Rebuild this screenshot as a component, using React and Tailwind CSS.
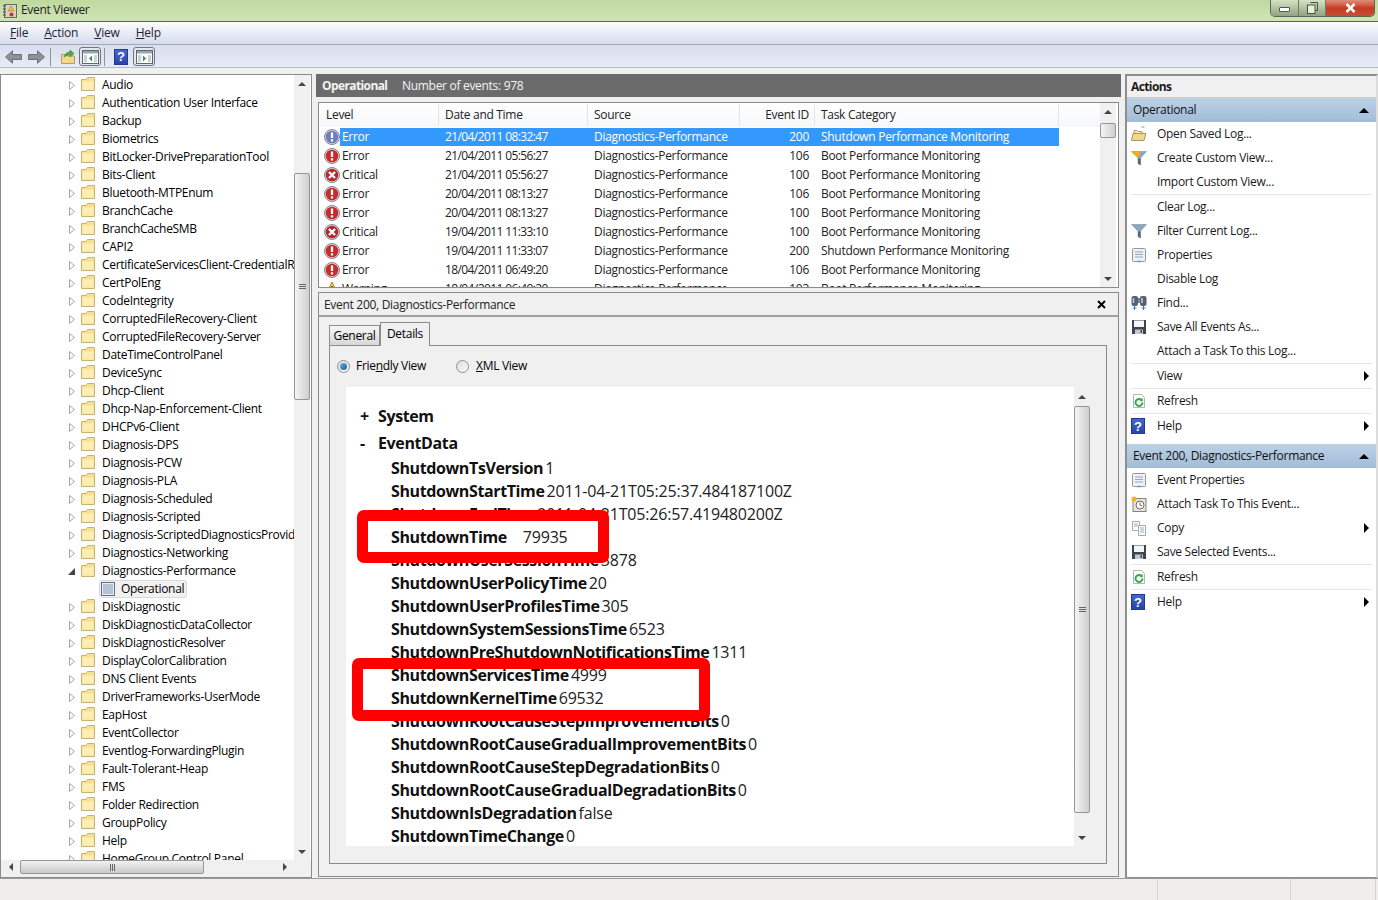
import React from "react";

const treeItems = [
  "Audio", "Authentication User Interface", "Backup", "Biometrics", "BitLocker-DrivePreparationTool",
  "Bits-Client", "Bluetooth-MTPEnum", "BranchCache", "BranchCacheSMB", "CAPI2",
  "CertificateServicesClient-CredentialRoaming", "CertPolEng", "CodeIntegrity", "CorruptedFileRecovery-Client",
  "CorruptedFileRecovery-Server", "DateTimeControlPanel", "DeviceSync", "Dhcp-Client", "Dhcp-Nap-Enforcement-Client",
  "DHCPv6-Client", "Diagnosis-DPS", "Diagnosis-PCW", "Diagnosis-PLA", "Diagnosis-Scheduled", "Diagnosis-Scripted",
  "Diagnosis-ScriptedDiagnosticsProvider", "Diagnostics-Networking", "Diagnostics-Performance", "Operational",
  "DiskDiagnostic", "DiskDiagnosticDataCollector", "DiskDiagnosticResolver", "DisplayColorCalibration",
  "DNS Client Events", "DriverFrameworks-UserMode", "EapHost", "EventCollector", "Eventlog-ForwardingPlugin",
  "Fault-Tolerant-Heap", "FMS", "Folder Redirection", "GroupPolicy", "Help", "HomeGroup Control Panel",
];

const events = [
  ["info", "Error", "21/04/2011 08:32:47", "200", "Shutdown Performance Monitoring"],
  ["error", "Error", "21/04/2011 05:56:27", "106", "Boot Performance Monitoring"],
  ["critical", "Critical", "21/04/2011 05:56:27", "100", "Boot Performance Monitoring"],
  ["error", "Error", "20/04/2011 08:13:27", "106", "Boot Performance Monitoring"],
  ["error", "Error", "20/04/2011 08:13:27", "100", "Boot Performance Monitoring"],
  ["critical", "Critical", "19/04/2011 11:33:10", "100", "Boot Performance Monitoring"],
  ["error", "Error", "19/04/2011 11:33:07", "200", "Shutdown Performance Monitoring"],
  ["error", "Error", "18/04/2011 06:49:20", "106", "Boot Performance Monitoring"],
  ["warning", "Warning", "18/04/2011 06:49:20", "103", "Boot Performance Monitoring"],
];

const eventData = [
  ["ShutdownTsVersion", "1"],
  ["ShutdownStartTime", "2011-04-21T05:25:37.484187100Z"],
  ["ShutdownEndTime", "2011-04-21T05:26:57.419480200Z"],
  ["ShutdownTime", "79935", "ml-[16px]"],
  ["ShutdownUserSessionTime", "3878"],
  ["ShutdownUserPolicyTime", "20"],
  ["ShutdownUserProfilesTime", "305"],
  ["ShutdownSystemSessionsTime", "6523"],
  ["ShutdownPreShutdownNotificationsTime", "1311"],
  ["ShutdownServicesTime", "4999"],
  ["ShutdownKernelTime", "69532"],
  ["ShutdownRootCauseStepImprovementBits", "0"],
  ["ShutdownRootCauseGradualImprovementBits", "0"],
  ["ShutdownRootCauseStepDegradationBits", "0"],
  ["ShutdownRootCauseGradualDegradationBits", "0"],
  ["ShutdownIsDegradation", "false"],
  ["ShutdownTimeChange", "0"],
];

function FolderIcon() {
  return (
    <svg width="14" height="14" viewBox="0 0 14 14" className="-mt-[3px] shrink-0">
      <path d="M.5 13.500V2.500h4.500l1.500-2h7v13z" fill="#f9e08f" stroke="#c8b27a" />
      <path d="M1.500 4.500h11v8h-11z" fill="#fdeeb4" />
    </svg>
  );
}

function LogIcon() {
  return (
    <svg width="14" height="16" viewBox="0 0 14 16" className="shrink-0">
      <rect x=".5" y="1.500" width="13" height="13" fill="#e8eef6" stroke="#5f6f85" />
      <path d="M2 4h10M2 6h10M2 8h10M2 10h10M2 12h10" stroke="#8296b2" />
    </svg>
  );
}

function LevelIcon({ type }) {
  if (type === "warning") {
    return (
      <svg width="16" height="16" viewBox="0 0 16 16" className="shrink-0">
        <path d="M8 1 15 15H1z" fill="#fcd34d" stroke="#b58a12" />
        <path d="M8 5v6M8 12v2" stroke="#333" strokeWidth="1.500" />
      </svg>
    );
  }
  const fills = { info: "#6f7cc0", error: "#c92a2a", critical: "#b4282d" };
  return (
    <svg width="16" height="16" viewBox="0 0 16 16" className="shrink-0">
      <circle cx="8" cy="8" r="7.500" fill="#dcdce2" stroke="#85858e" />
      <circle cx="8" cy="8" r="6.300" fill={fills[type]} />
      {type === "critical" ? (
        <path d="M5 5l6 6M11 5l-6 6" stroke="#fff" strokeWidth="2.300" />
      ) : (
        <path d="M8 3.500v5.500M8 10.300v2.200" stroke="#fff" strokeWidth="2.300" />
      )}
    </svg>
  );
}

function HelpIcon() {
  return (
    <span className="flex h-[16px] w-[14px] shrink-0 items-center justify-center border border-[#23388f] bg-gradient-to-b from-[#4468cf] to-[#2a43a8] font-['Liberation_Sans',sans-serif] text-[13px] leading-none font-bold tracking-normal text-white">
      ?
    </span>
  );
}

function RefreshIcon() {
  return (
    <svg width="16" height="16" viewBox="0 0 16 16">
      <path d="M2.500 1.500h8l3 3v10h-11z" fill="#fff" stroke="#b5b5b5" />
      <path d="M11.500 9.500a3.500 3.500 0 1 1-1-2.500" fill="none" stroke="#38a84a" strokeWidth="2" />
      <path d="M11.800 4.800v3.400H8.400z" fill="#38a84a" />
    </svg>
  );
}

function PropsIcon() {
  return (
    <svg width="16" height="16" viewBox="0 0 16 16">
      <rect x="1.500" y="1.500" width="13" height="13" rx="1" fill="#eef1f5" stroke="#8f98a3" />
      <path d="M4 5h8M4 7.500h8M4 10h8" stroke="#9aa5b3" />
      <path d="M6 14.500h4" stroke="#4aa3df" strokeWidth="1.500" />
    </svg>
  );
}

function SaveIcon() {
  return (
    <svg width="16" height="16" viewBox="0 0 16 16">
      <path d="M1 1h14v14H1z" fill="#3d4650" />
      <path d="M3 1.500h10V8H3z" fill="#f4f5f6" />
      <path d="M4 10.500h8V15H4z" fill="#c5c9ce" />
      <path d="M9.500 11H11v3H9.500z" fill="#3d4650" />
    </svg>
  );
}

function FunnelIcon({ tint }) {
  return (
    <svg width="16" height="16" viewBox="0 0 16 16">
      <path d="M.5 1.500h15L9.500 8v7l-2.500-1.500V8z" fill="#86a9c4" stroke="#6a8294" strokeWidth=".5" />
      <path d="M7 8.500h2.500V15L7 13.500z" fill="#59656f" />
      {tint && <path d="M.5 1.500h9.500L7.500 7H5.500z" fill="#f5ad18" />}
    </svg>
  );
}

function ActionIcon({ name }) {
  if (name === "open") {
    return (
      <svg width="16" height="16" viewBox="0 0 16 16">
        <path d="M3 7V4.500h3l1 1h4V7" fill="#f7e9bd" stroke="#b39a5e" />
        <path d="M.5 14.500 2 7.500h13l-2 7z" fill="#efd691" stroke="#ad955c" />
        <path d="M10.500 1h3" stroke="#5cb85c" />
      </svg>
    );
  }
  if (name === "create") return <FunnelIcon tint />;
  if (name === "filter") return <FunnelIcon />;
  if (name === "props") return <PropsIcon />;
  if (name === "save") return <SaveIcon />;
  if (name === "refresh") return <RefreshIcon />;
  if (name === "help") return <HelpIcon />;
  if (name === "find") {
    return (
      <svg width="16" height="16" viewBox="0 0 16 16">
        <rect x=".5" y="1" width="6.500" height="10" rx="2" fill="#566172" />
        <rect x="9" y="1" width="6.500" height="10" rx="2" fill="#566172" />
        <path d="M7 3h2v5H7z" fill="#7a8493" />
        <path d="M2.500 3v5M11 3v5" stroke="#c3ccd7" strokeWidth="1.500" />
        <path d="M3.500 11v4M12.500 11v4M1.500 13h4M10.500 13h4" stroke="#3b82c4" />
      </svg>
    );
  }
  if (name === "task") {
    return (
      <svg width="16" height="16" viewBox="0 0 16 16">
        <rect x="2" y="2.500" width="13" height="13" fill="#e6e2dc" stroke="#8a8378" />
        <circle cx="9" cy="9" r="4" fill="#fff" stroke="#6f6a62" />
        <path d="M9 6.500V9l2 1" fill="none" stroke="#6f6a62" />
        <circle cx="3" cy="3" r="2.500" fill="#f4b120" />
      </svg>
    );
  }
  if (name === "copy") {
    return (
      <svg width="16" height="16" viewBox="0 0 16 16">
        <path d="M1.500 1.500h7v9h-7z" fill="#fff" stroke="#a9a9a9" />
        <path d="M7.500 5.500h7v10h-7z" fill="#fff" stroke="#a9a9a9" />
        <path d="M3 4h4M3 6h4M9 8h4M9 10h4M9 12h4" stroke="#8fb0d0" />
      </svg>
    );
  }
  return null;
}

const actionsA = [
  ["open", "Open Saved Log..."],
  ["create", "Create Custom View..."],
  [null, "Import Custom View..."],
  "sep",
  [null, "Clear Log..."],
  ["filter", "Filter Current Log..."],
  ["props", "Properties"],
  [null, "Disable Log"],
  ["find", "Find..."],
  ["save", "Save All Events As..."],
  [null, "Attach a Task To this Log..."],
  "sep",
  [null, "View", true],
  "sep",
  ["refresh", "Refresh"],
  "sep",
  ["help", "Help", true],
];

const actionsB = [
  ["props", "Event Properties"],
  ["task", "Attach Task To This Event..."],
  ["copy", "Copy", true],
  ["save", "Save Selected Events..."],
  "sep",
  ["refresh", "Refresh"],
  "sep",
  ["help", "Help", true],
];

function ActionList({ items }) {
  return items.map((item, i) =>
    item === "sep" ? (
      <div key={i} className="mx-[4px] h-px bg-[#e6e6e6]" />
    ) : (
      <div key={i} className="flex h-[24px] items-center pr-[7px] pl-[4px]">
        <span className="flex w-[26px] shrink-0 items-center">
          <ActionIcon name={item[0]} />
        </span>
        <span className="flex-1">{item[1]}</span>
        {item[2] && <span className="h-0 w-0 border-y-[5px] border-l-[5px] border-y-transparent border-l-black" />}
      </div>
    )
  );
}

function SectionHead({ children }) {
  return (
    <div className="flex h-[24px] items-center justify-between bg-gradient-to-b from-[#bcd2e6] to-[#a2bcd8] pr-[7px] pl-[6px] text-[#111]">
      <span>{children}</span>
      <span className="h-0 w-0 border-x-[5px] border-b-[5px] border-x-transparent border-b-black" />
    </div>
  );
}

function ScrollArrow({ dir }) {
  const cls = {
    up: "border-x-[4px] border-b-[4px] border-x-transparent border-b-[#444]",
    down: "border-x-[4px] border-t-[4px] border-x-transparent border-t-[#444]",
    left: "border-y-[4px] border-r-[4px] border-y-transparent border-r-[#444]",
    right: "border-y-[4px] border-l-[4px] border-y-transparent border-l-[#444]",
  };
  return <span className={`h-0 w-0 ${cls[dir]}`} />;
}

function Grip() {
  return (
    <span className="flex flex-col gap-px">
      <span className="h-px w-[7px] bg-[#666]" />
      <span className="h-px w-[7px] bg-[#666]" />
      <span className="h-px w-[7px] bg-[#666]" />
    </span>
  );
}

function VScroll({ before, thumb, grip, className }) {
  return (
    <div className={`flex w-[16px] shrink-0 flex-col bg-[#f0f0f0] ${className}`}>
      <div className="flex h-[17px] shrink-0 items-center justify-center">
        <ScrollArrow dir="up" />
      </div>
      <div className="shrink-0" style={{ height: before }} />
      <div
        className="flex shrink-0 items-center justify-center rounded-[2px] border border-[#979797] bg-gradient-to-r from-[#f4f4f4] to-[#cfcfcf]"
        style={{ height: thumb }}
      >
        {grip && <Grip />}
      </div>
      <div className="flex-1" />
      <div className="flex h-[17px] shrink-0 items-center justify-center">
        <ScrollArrow dir="down" />
      </div>
    </div>
  );
}

function Radio({ checked }) {
  return (
    <span className="flex h-[13px] w-[13px] items-center justify-center rounded-full border border-[#8e8f8f] bg-gradient-to-br from-[#dcdcdc] to-[#fafafa]">
      {checked && <span className="h-[7px] w-[7px] rounded-full bg-gradient-to-br from-[#63b3e0] to-[#0f5f94]" />}
    </span>
  );
}

function ToolButton({ mirror }) {
  return (
    <span className="flex h-[19px] w-[22px] items-center justify-center rounded-[3px] border border-[#6f7480] bg-[#e4e7ee]">
      <svg width="17" height="14" viewBox="0 0 17 14">
        <rect x=".5" y=".5" width="16" height="13" fill="#fff" stroke="#5f6670" />
        <path d="M1 1h15v2.500H1z" fill="#9aa4b0" />
        <path d="M5 5v7H2V5zM15 5v7h-3V5z" fill="#c8d0da" />
        <path d={mirror ? "M7 5.500l3 3-3 3z" : "M10 5.500l-3 3 3 3z"} fill="#2e9a3e" />
      </svg>
    </span>
  );
}

function TitleBar() {
  return (
    <div className="flex h-[22px] shrink-0 items-start border-b border-[#59684a] bg-gradient-to-b from-[#c0d9a0] to-[#cfe4b4]">
      <svg width="16" height="16" viewBox="0 0 16 16" className="mt-[3px] ml-[2px]">
        <rect x="2.500" y="1.500" width="12" height="13" fill="#d8d2c2" stroke="#6c6a64" />
        <path d="M1 3h3M1 6h3M1 9h3M1 12h3" stroke="#444" />
        <path d="M9 3l3 5H6z" fill="#f4c430" stroke="#8d6d10" strokeWidth=".5" />
        <circle cx="9.500" cy="11.500" r="2" fill="#c8302f" />
      </svg>
      <span className="mt-[4px] ml-[3px] text-[#222]">Event Viewer</span>
      <div className="mr-[3px] ml-auto flex h-[17px] overflow-hidden rounded-b-[5px] border border-t-0 border-[#5a6a50]">
        <span className="flex w-[28px] items-center justify-center border-r border-[#6d7d63] bg-gradient-to-b from-[#d5e3c3] to-[#90a383]">
          <span className="mt-[3px] h-[5px] w-[11px] rounded-[1px] border border-[#4e5a48] bg-white" />
        </span>
        <span className="flex w-[27px] items-center justify-center border-r border-[#6d7d63] bg-gradient-to-b from-[#d5e3c3] to-[#90a383]">
          <svg width="11" height="12" viewBox="0 0 11 12">
            <path d="M3.500 .5h7v8h-2" fill="none" stroke="#46523f" />
            <rect x=".5" y="3" width="7.500" height="8.500" fill="#e8f0dd" stroke="#46523f" />
          </svg>
        </span>
        <span className="flex w-[48px] items-center justify-center bg-gradient-to-b from-[#dc8e7c] via-[#c73a22] to-[#c34f36]">
          <svg width="11" height="10" viewBox="0 0 11 10">
            <path d="M1.500 1l8 8M9.500 1l-8 8" stroke="#fff" strokeWidth="2.500" />
          </svg>
        </span>
      </div>
    </div>
  );
}

function MenuBar() {
  const items = [
    ["F", "ile"],
    ["A", "ction"],
    ["V", "iew"],
    ["H", "elp"],
  ];
  return (
    <div className="flex h-[23px] shrink-0 items-center gap-[16px] border-b border-[#a5a9b4] bg-gradient-to-b from-[#fdfdfe] to-[#d4dbec] pl-[10px] tracking-[-0.2px] text-[#1d2433]">
      {items.map(([key, rest]) => (
        <span key={key}>
          <span className="underline">{key}</span>
          {rest}
        </span>
      ))}
    </div>
  );
}

function Toolbar() {
  return (
    <div className="flex h-[23px] shrink-0 items-center border-b border-[#b6bac4] bg-gradient-to-b from-[#d8deee] to-[#e9ecf7] pt-px pl-[5px]">
      <svg width="17" height="14" viewBox="0 0 17 14">
        <path d="M.5 7 7.500 .8V4.500h9v5h-9v3.700z" fill="#8c9097" stroke="#6d7177" />
      </svg>
      <svg width="17" height="14" viewBox="0 0 17 14" className="ml-[6px]">
        <path d="M16.500 7 9.500 .8V4.500h-9v5h9v3.700z" fill="#8c9097" stroke="#6d7177" />
      </svg>
      <span className="mr-[9px] ml-[5px] h-[18px] w-px bg-[#8f939c]" />
      <svg width="16" height="16" viewBox="0 0 16 16">
        <path d="M1.500 14.500V5.500h5l1 1.500h7v7.500z" fill="#f0d98c" stroke="#b59d5d" />
        <path d="M4 8c1-4 4-5 6-5V1l4 3.500L10 8V6C8 6 6 6.500 4 8z" fill="#52a845" stroke="#2f7a2a" strokeWidth=".5" />
      </svg>
      <span className="ml-[3px]">
        <ToolButton />
      </span>
      <span className="mr-[9px] ml-[3px] h-[18px] w-px bg-[#8f939c]" />
      <HelpIcon />
      <span className="ml-[5px]">
        <ToolButton mirror />
      </span>
    </div>
  );
}

function TreePane() {
  return (
    <div className="flex w-[312px] shrink-0 flex-col border border-[#8b8b8b] bg-white">
      <div className="flex min-h-0 flex-1">
        <div className="min-w-0 flex-1 overflow-hidden pt-[1px]">
          {treeItems.map((name) => {
            if (name === "Operational") {
              return (
                <div key={name} className="flex h-[18px] items-center pl-[98px]">
                  <span className="flex h-[18px] items-center gap-[6px] rounded-[3px] border border-[#d9d9d9] bg-[#f1f1f1] pr-[2px] pl-[1px]">
                    <LogIcon />
                    {name}
                  </span>
                </div>
              );
            }
            const open = name === "Diagnostics-Performance";
            return (
              <div key={name} className="flex h-[18px] items-center whitespace-nowrap">
                {open ? (
                  <span className="mr-[6px] ml-[67px] h-0 w-0 border-b-[7px] border-l-[7px] border-b-[#444] border-l-transparent" />
                ) : (
                  <svg width="6" height="9" viewBox="0 0 6 9" className="mr-[6px] ml-[68px] shrink-0">
                    <path d="M.5.5 5.500 4.500.5 8.500z" fill="#fff" stroke="#a6a6a6" />
                  </svg>
                )}
                <FolderIcon />
                <span className="ml-[7px]">{name}</span>
              </div>
            );
          })}
        </div>
        <VScroll before={81} thumb={227} grip className="mr-[1px]" />
      </div>
      <div className="flex h-[17px] shrink-0 items-start bg-[#f0f0f0] pr-[20px]">
        <span className="flex h-[14px] w-[19px] items-center justify-center">
          <ScrollArrow dir="left" />
        </span>
        <span className="flex h-[14px] w-[184px] items-center justify-center rounded-[2px] border border-[#979797] bg-gradient-to-b from-[#f2f2f2] to-[#c9c9c9]">
          <span className="flex gap-px">
            <span className="h-[7px] w-px bg-[#666]" />
            <span className="h-[7px] w-px bg-[#666]" />
            <span className="h-[7px] w-px bg-[#666]" />
          </span>
        </span>
        <span className="ml-auto flex h-[14px] w-[12px] items-center justify-center">
          <ScrollArrow dir="right" />
        </span>
      </div>
    </div>
  );
}

function EventTable() {
  return (
    <div className="flex h-[186px] shrink-0 overflow-hidden border border-[#8b8b8b] bg-white pl-px">
      <div className="min-w-0 flex-1 overflow-hidden">
        <div className="flex h-[24px] items-center bg-gradient-to-b from-white to-[#f6f7f9] text-[#222]">
          <span className="w-[119px] border-r border-[#e3e4e6] pl-[6px] leading-[22px]">Level</span>
          <span className="w-[149px] border-r border-[#e3e4e6] pl-[6px] leading-[22px]">Date and Time</span>
          <span className="w-[152px] border-r border-[#e3e4e6] pl-[6px] leading-[22px]">Source</span>
          <span className="w-[75px] border-r border-[#e3e4e6] pr-[5px] text-right leading-[22px]">Event ID</span>
          <span className="w-[244px] border-r border-[#e3e4e6] pl-[6px] leading-[22px]">Task Category</span>
        </div>
        {events.map(([type, level, date, id, task], i) => (
          <div key={i} className="flex h-[19px] w-[739px] items-center pl-[4px]">
            <LevelIcon type={type} />
            <div className={`flex h-[18px] flex-1 items-center whitespace-nowrap ${i === 0 ? "bg-[#3399ff] text-white" : "text-[#222]"}`}>
              <span className="w-[105px] pl-[2px]">{level}</span>
              <span className="w-[149px] tracking-[-0.6px]">{date}</span>
              <span className="w-[172px]">Diagnostics-Performance</span>
              <span className="w-[43px] text-right">{id}</span>
              <span className="pl-[12px]">{task}</span>
            </div>
          </div>
        ))}
      </div>
      <VScroll before={3} thumb={15} className="mr-[2px]" />
    </div>
  );
}

function DetailPane() {
  return (
    <div className="relative mt-[4px] flex min-h-0 flex-1 flex-col border border-[#8b8b8b] bg-[#f0f0f0]">
      <div className="flex h-[24px] shrink-0 items-center justify-between border-b-2 border-[#a0a0a0] pt-px pr-[12px] pl-[5px] text-[#222]">
        <span>Event 200, Diagnostics-Performance</span>
        <svg width="9" height="9" viewBox="0 0 9 9">
          <path d="M1 1l7 7M8 1 1 8" stroke="#000" strokeWidth="2" />
        </svg>
      </div>
      <div className="flex h-[28px] shrink-0 items-end pl-[10px]">
        <span className="flex h-[20px] w-[51px] items-center justify-center border border-b-0 border-[#8c8c8c] bg-gradient-to-b from-[#f6f6f6] to-[#d8d8d8]">
          General
        </span>
        <span className="relative z-10 -mb-px flex h-[24px] w-[50px] items-center justify-center border border-b-0 border-[#8c8c8c] bg-[#f0f0f0] pb-[2px]">
          Details
        </span>
      </div>
      <div className="mr-[11px] mb-[12px] ml-[10px] flex min-h-0 flex-1 flex-col border border-[#8c8c8c] bg-[#f0f0f0]">
        <div className="flex h-[41px] shrink-0 items-center pb-px pl-[7px]">
          <Radio checked />
          <span className="ml-[6px]">
            Frie<span className="underline">n</span>dly View
          </span>
          <span className="ml-[30px]">
            <Radio />
          </span>
          <span className="ml-[7px]">
            <span className="underline">X</span>ML View
          </span>
        </div>
        <div className="mr-[16px] mb-[17px] ml-[16px] flex min-h-0 flex-1 overflow-hidden bg-white">
          <div className="min-w-0 flex-1 overflow-hidden pt-[15px] pl-[14px] font-['Open_Sans',sans-serif] text-[16px] tracking-[-0.38px] text-[#111]">
            <div className="flex h-[27px] items-center font-bold">
              <span className="w-[18px]">+</span>System
            </div>
            <div className="flex h-[27px] items-center font-bold">
              <span className="w-[18px]">-</span>EventData
            </div>
            <div className="pl-[31px]">
              {eventData.map(([key, value, extra]) => (
                <div key={key} className="flex h-[23px] items-center whitespace-nowrap">
                  <span className="font-bold">{key}</span>
                  <span className={`ml-[2px] font-normal tracking-[-0.2px] text-[#222] ${extra || ""}`}>{value}</span>
                </div>
              ))}
            </div>
          </div>
          <VScroll before={1} thumb={407} grip className="pt-px" />
        </div>
      </div>
      <div className="absolute top-[217px] left-[38px] h-[53px] w-[252px] rounded-[7px] border-[11px] border-[#fe0000]" />
      <div className="absolute top-[365px] left-[33px] h-[63px] w-[358px] rounded-[7px] border-[11px] border-[#fe0000]" />
    </div>
  );
}

function ActionsPane() {
  return (
    <div className="flex w-[253px] shrink-0 flex-col border-2 border-b border-[#8e8e8e] border-r-[#dcdcdc] bg-white text-[#1a1a1a]">
      <div className="flex h-[22px] shrink-0 items-center border-b border-[#cfcfcf] bg-[#f0f0f0] pl-[4px] font-bold tracking-[-0.6px]">
        Actions
      </div>
      <SectionHead>Operational</SectionHead>
      <ActionList items={actionsA} />
      <div className="h-[6px]" />
      <SectionHead>Event 200, Diagnostics-Performance</SectionHead>
      <ActionList items={actionsB} />
    </div>
  );
}

export default function App() {
  return (
    <div className="flex h-[900px] w-[1378px] flex-col overflow-hidden bg-[#f0f0f0] font-['Open_Sans',sans-serif] text-[12px] leading-none tracking-[-0.3px]">
      <TitleBar />
      <MenuBar />
      <Toolbar />
      <div className="flex min-h-0 flex-1 pt-[6px]">
        <TreePane />
        <div className="mr-[4px] ml-[4px] flex min-w-0 flex-1 flex-col">
          <div className="mb-[5px] flex h-[23px] shrink-0 items-center bg-[#6b6b6b] pl-[6px] text-[#f4f4f4]">
            <span className="w-[80px] font-bold tracking-[-0.6px]">Operational</span>
            Number of events: 978
          </div>
          <div className="flex min-h-0 flex-1 flex-col px-[2px] pb-[1px]">
            <EventTable />
            <DetailPane />
          </div>
        </div>
        <ActionsPane />
      </div>
      <div className="flex h-[22px] shrink-0 border-t border-[#9a9a9a] bg-[#f0eded]">
        <div className="ml-[1157px] w-px bg-[#d5d2d2]" />
        <div className="ml-[132px] w-px bg-[#d5d2d2]" />
        <div className="ml-[84px] w-px bg-[#d5d2d2]" />
      </div>
    </div>
  );
}
